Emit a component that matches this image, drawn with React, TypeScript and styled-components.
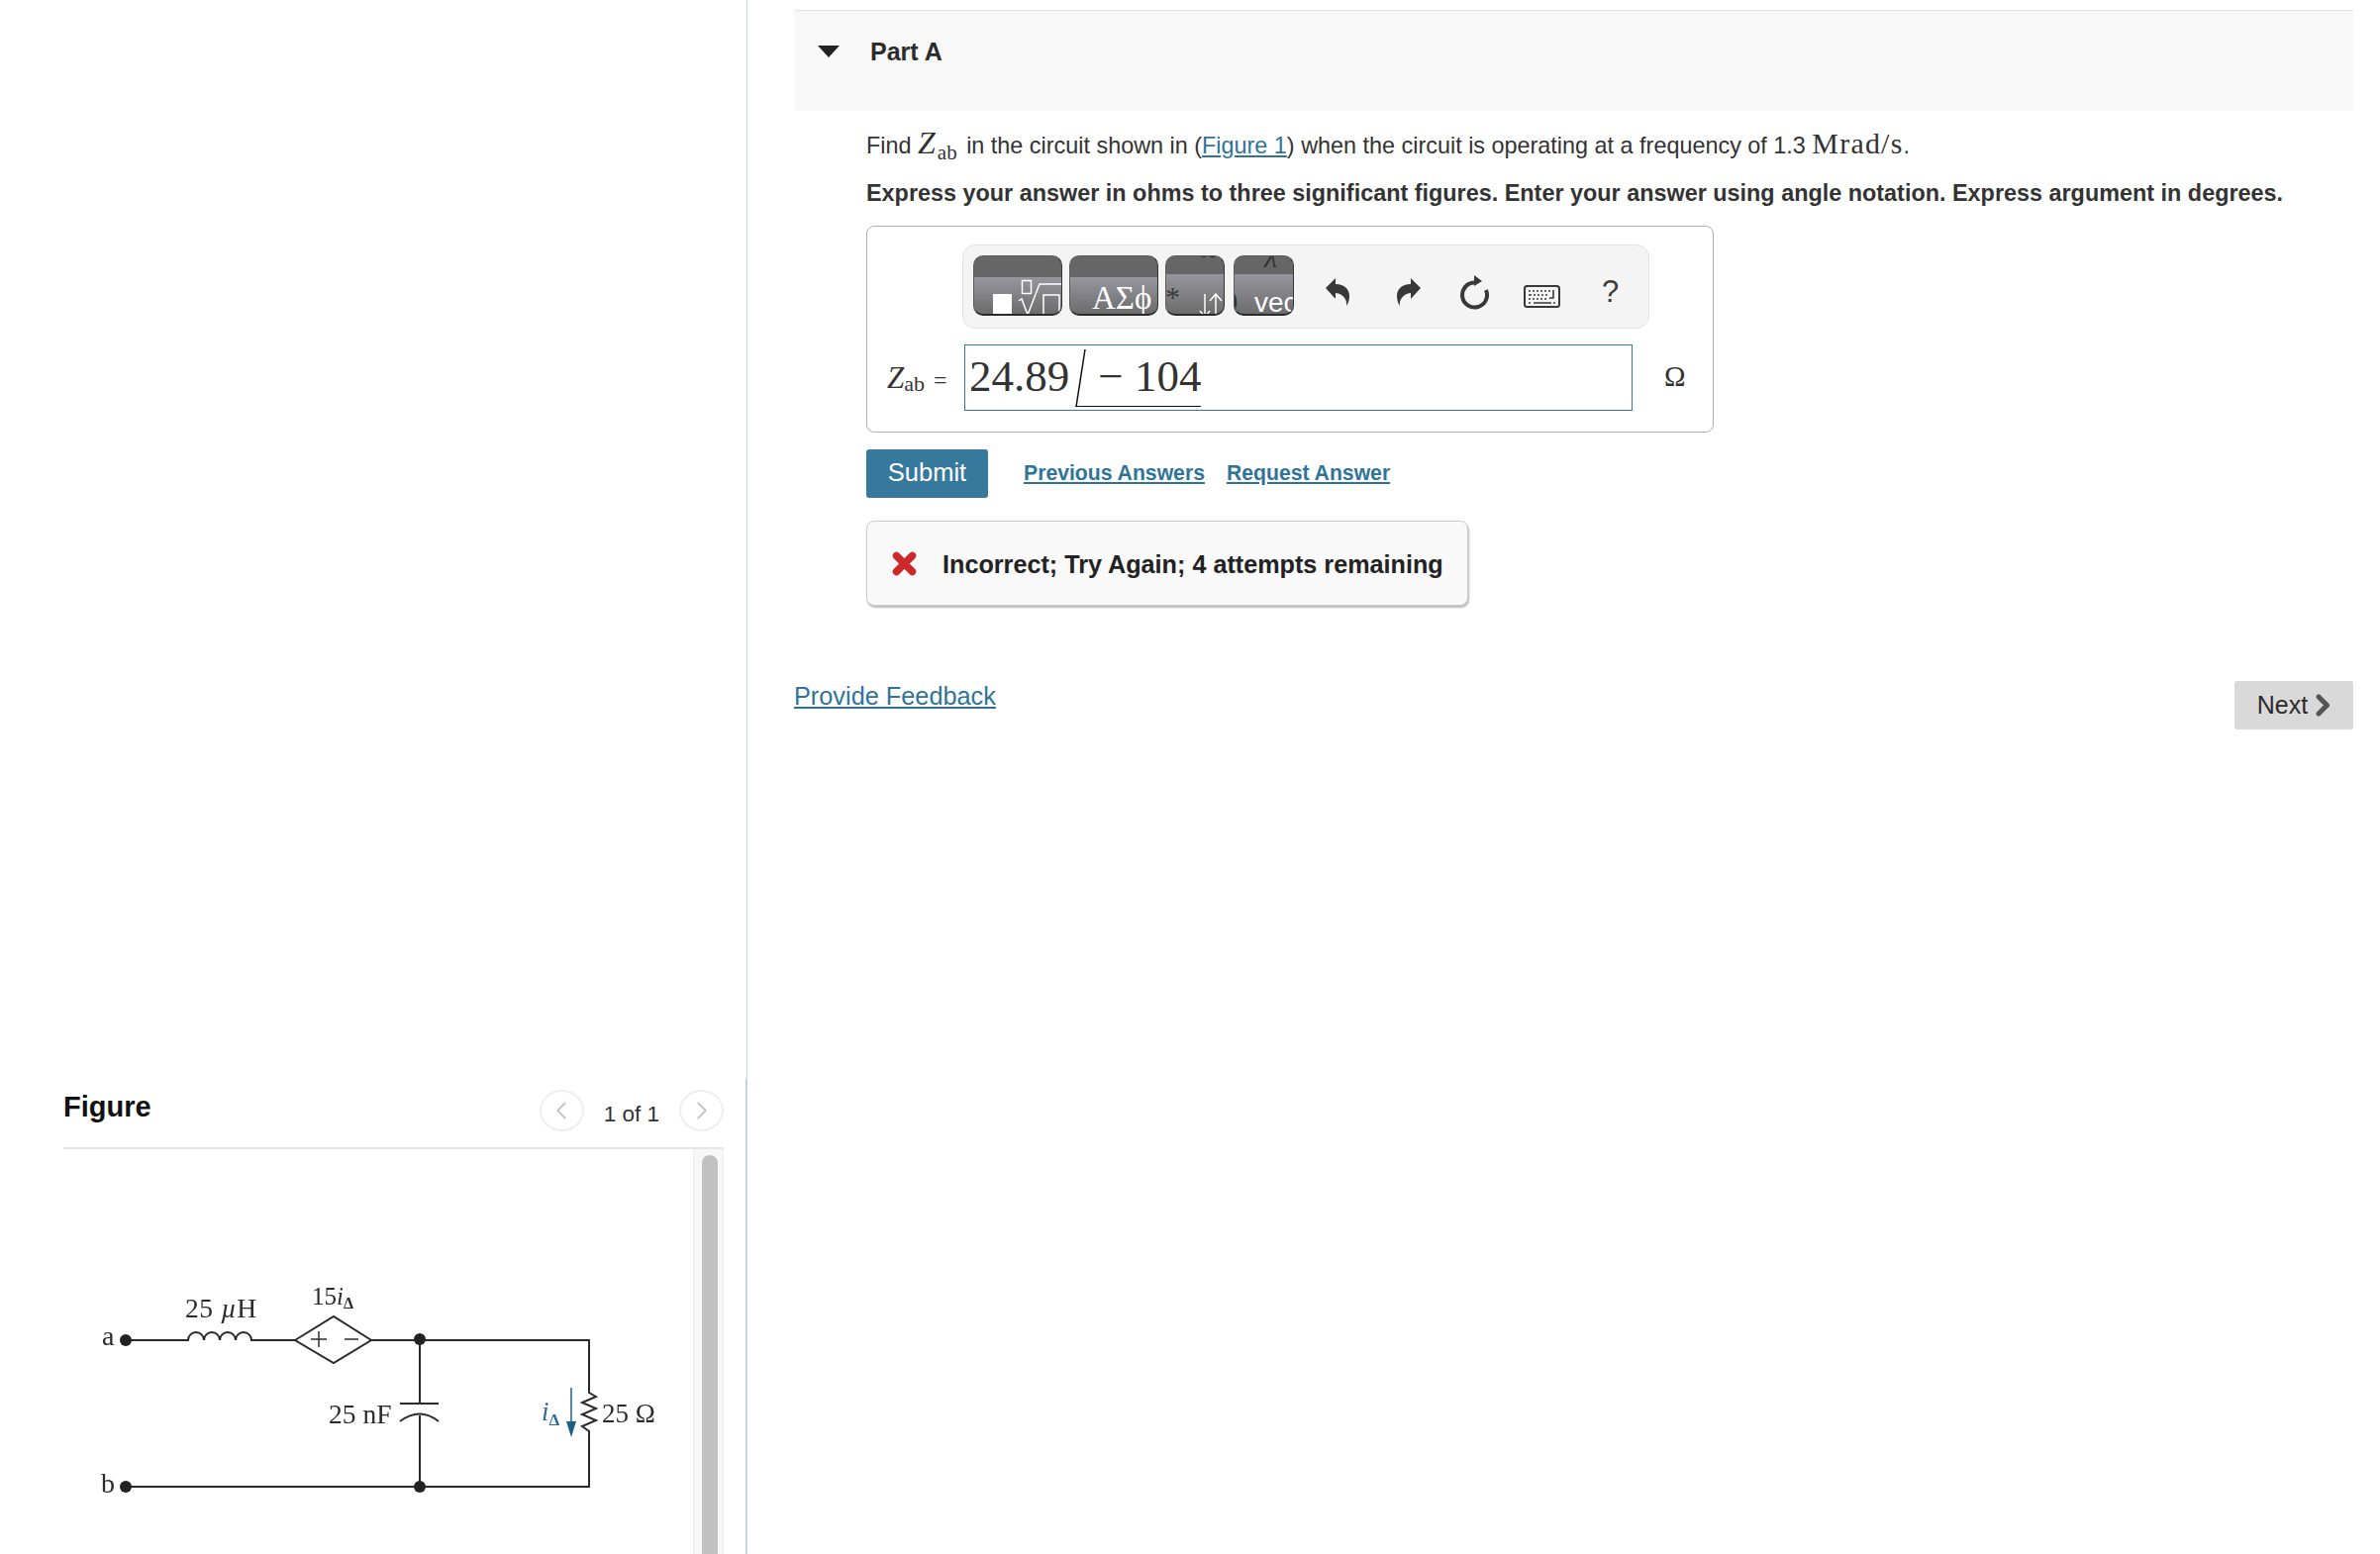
import React from 'react';
import styled, {createGlobalStyle} from 'styled-components';
import {ChevronLeft, ChevronRight} from 'lucide-react';

const GlobalStyle = createGlobalStyle`
  html, body {
    margin: 0;
    padding: 0;
    background: #fff;
    color: #333;
    font-family: "Liberation Sans", Arial, sans-serif;
  }
  * {
    box-sizing: border-box;
  }
`;

const Page = styled.div`
  display: flex;
  width: 2404px;
  height: 1570px;
  overflow: hidden;
`;

const Aside = styled.aside`
  flex: 0 0 754px;
  padding-top: 1090px;
  border-right: 1px solid #c6d5e6;
`;

const FigurePanel = styled.section`
  height: 480px;
  padding: 11px 22px 0 64px;
  border-right: 1px solid #c6d5e6;
  display: flex;
  flex-direction: column;
`;

const FigureHeader = styled.div`
  display: flex;
  justify-content: space-between;
  align-items: flex-start;
  height: 60px;
  border-bottom: 2px solid #e6e6e6;
`;

const FigureTitle = styled.h2`
  margin: 0;
  font-size: 29px;
  line-height: 34px;
  font-weight: bold;
  color: #111;
`;

const Pager = styled.div`
  display: flex;
  align-items: center;
  gap: 20px;
  height: 42px;
`;

const PagerButton = styled.span`
  width: 45px;
  height: 42px;
  border: 2px solid #eee;
  border-radius: 50%;
  display: flex;
  align-items: center;
  justify-content: center;
  color: #c4c4c4;
`;

const PagerText = styled.span`
  font-size: 22.5px;
  line-height: 32px;
  padding-top: 8px;
  color: #333;
`;

const FigureBody = styled.div`
  flex: 1;
  display: flex;
  min-height: 0;
`;

const DiagramSvg = styled.svg`
  flex: 0 0 636px;
  width: 636px;
  height: 408px;
  filter: blur(0.4px);
`;

const ScrollTrack = styled.div`
  flex: 0 0 30px;
  padding: 6px 5px 0 8px;
  background: #f7f7f7;
  border-left: 1px solid #ececec;
  border-right: 1px solid #ececec;
`;

const ScrollThumb = styled.div`
  width: 16px;
  height: 100%;
  background: #c1c1c1;
  border-radius: 8px 8px 0 0;
`;

const Main = styled.main`
  flex: 1;
  padding: 10px 27px 0 47px;
`;

const PartHeader = styled.div`
  display: flex;
  align-items: flex-start;
  height: 102px;
  padding: 25px 0 0 24px;
  background: #f8f8f8;
  border-top: 1px solid #e2e2e2;
`;

const Triangle = styled.span`
  width: 0;
  height: 0;
  margin: 10px 31px 0 0;
  border-left: 11px solid transparent;
  border-right: 11px solid transparent;
  border-top: 12px solid #222;
`;

const PartTitle = styled.h3`
  margin: 0;
  font-size: 25px;
  line-height: 32px;
  font-weight: bold;
  color: #2b2b2b;
`;

const PartBody = styled.div`
  padding-left: 73px;
`;

const Paragraph = styled.p<{$top: number; $bold?: boolean}>`
  margin: ${p => p.$top}px 0 0;
  font-size: 23.4px;
  line-height: 32px;
  font-weight: ${p => (p.$bold ? 'bold' : 'normal')};
  color: #333;
  white-space: nowrap;
`;

const MathVar = styled.span`
  font-family: "Liberation Serif", "Times New Roman", serif;
  font-style: italic;
  font-size: 32px;
  line-height: 0;
  margin-right: 2px;
`;

const MathSub = styled.sub`
  font-family: "Liberation Serif", "Times New Roman", serif;
  font-size: 21px;
  line-height: 0;
  vertical-align: -6px;
  margin-right: 3px;
`;

const MathText = styled.span`
  font-family: "Liberation Serif", "Times New Roman", serif;
  font-size: 30px;
  line-height: 0;
  letter-spacing: 1.2px;
`;

const TextLink = styled.a`
  color: #2f7498;
  text-decoration: underline;
`;

const AnswerBox = styled.div`
  width: 856px;
  height: 209px;
  margin-top: 17px;
  padding: 18px 0 0 96px;
  border: 1px solid #b0b0b0;
  border-radius: 8px;
`;

const Toolbar = styled.div`
  display: flex;
  align-items: flex-start;
  width: 694px;
  height: 85px;
  padding: 10px 0 0 10px;
  background: #f4f4f4;
  border: 1px solid #e2e2e2;
  border-radius: 13px;
`;

const PaletteButton = styled.span<{$width: number; $gap: number; $band: number}>`
  flex: 0 0 ${p => p.$width}px;
  height: 61px;
  margin-right: ${p => p.$gap}px;
  overflow: hidden;
  border-radius: 10px;
  border: 1px solid #5c5c5c;
  border-bottom: 2px solid #2a2a2a;
  border-right-color: #333;
  background:
    linear-gradient(#666 0, #666 ${p => p.$band}px, #97969f ${p => p.$band}px, #6c6c6c 100%);
  svg {
    display: block;
    margin: -1px;
  }
`;

const ToolIcon = styled.span<{$left: number; $top: number}>`
  display: flex;
  margin-left: ${p => p.$left}px;
  margin-top: ${p => p.$top}px;
  color: #383838;
`;

const HelpMark = styled.span`
  margin-left: 42px;
  margin-top: 19px;
  font-size: 31px;
  line-height: 36px;
  color: #3a3a3a;
`;

const InputRow = styled.div`
  display: flex;
  align-items: center;
  margin: 16px 0 0 -96px;
`;

const InputLabel = styled.label`
  flex: 0 0 98px;
  padding-left: 20px;
  font-family: "Liberation Serif", "Times New Roman", serif;
  font-size: 24px;
  color: #333;
  white-space: nowrap;
`;

const LabelVar = styled.i`
  font-size: 31px;
`;

const LabelSub = styled.span`
  font-size: 22px;
  margin-right: 9px;
  position: relative;
  top: 3px;
`;

const AnswerInput = styled.div`
  display: flex;
  align-items: center;
  width: 675px;
  height: 67px;
  padding: 0 0 4px 4px;
  border: 1px solid #37789b;
  font-family: "Liberation Serif", "Times New Roman", serif;
  font-size: 45px;
  color: #333;
`;

const AngleValue = styled.span`
  position: relative;
  margin-left: 6px;
  white-space: nowrap;
`;

const AngleMark = styled.svg`
  position: absolute;
  left: 0;
  top: 4px;
`;

const AngleLine = styled.span`
  display: block;
  height: 62px;
  padding: 5px 0 0 23px;
  line-height: 52px;
  border-bottom: 1.5px solid #111;
`;

const Unit = styled.span`
  margin-left: 32px;
  padding-bottom: 2px;
  font-family: "Liberation Serif", "Times New Roman", serif;
  font-size: 29px;
  color: #333;
`;

const ActionRow = styled.div`
  display: flex;
  align-items: center;
  margin-top: 17px;
`;

const SubmitButton = styled.button`
  width: 123px;
  height: 49px;
  padding: 0 0 2px;
  background: #37799c;
  border: none;
  border-radius: 3px;
  color: #fff;
  font-family: "Liberation Sans", Arial, sans-serif;
  font-size: 25.5px;
  margin-right: 36px;
`;

const ActionLink = styled.a`
  margin: 0 22px 2px 0;
  color: #2f7498;
  font-size: 21.2px;
  font-weight: bold;
  text-decoration: underline;
`;

const ResultBox = styled.div`
  display: flex;
  align-items: center;
  width: 608px;
  height: 86px;
  margin-top: 23px;
  padding: 0 0 0 25px;
  background: #f9f9f9;
  border: 1px solid #ccc;
  border-radius: 8px;
  box-shadow: 1px 2px 2px #bbb;
`;

const ResultText = styled.span`
  margin-left: 26px;
  padding-top: 3px;
  font-size: 25.2px;
  font-weight: bold;
  color: #222;
  white-space: nowrap;
`;

const Footer = styled.div`
  display: flex;
  justify-content: space-between;
  align-items: flex-start;
  margin-top: 75px;
`;

const FeedbackLink = styled.a`
  color: #2f7498;
  font-size: 25.3px;
  line-height: 32px;
  text-decoration: underline;
`;

const NextButton = styled.button`
  display: flex;
  align-items: center;
  justify-content: center;
  gap: 8px;
  width: 120px;
  height: 49px;
  margin-top: 1px;
  padding: 0;
  background: #d9d9d9;
  border: none;
  border-radius: 3px;
  color: #2a2a2a;
  font-family: "Liberation Sans", Arial, sans-serif;
  font-size: 25px;
`;

const serif = '"Liberation Serif", "Times New Roman", serif';

function PaletteIcon({w, children}: {w: number; children: React.ReactNode}) {
  return (
    <svg width={w} height={61} viewBox={`0 0 ${w} 61`}>
      {children}
    </svg>
  );
}

function Circuit() {
  const ink = '#2b2b2b';
  return (
    <DiagramSvg viewBox="64 1162 636 408">
      <g fill="none" stroke={ink} strokeWidth="2">
        <path d="M127 1355H190a8 8 0 0 1 16 0a8 8 0 0 1 16 0a8 8 0 0 1 16 0a8 8 0 0 1 16 0H298" />
        <polygon points="298,1355 337,1331 375,1355 337,1378" />
        <path d="M375 1355H595V1408L602 1412L588 1418L602 1424L588 1430L602 1436L588 1442L595 1447V1503H127" />
        <path d="M424 1355V1419M404 1419H443M424 1431V1503M404 1437Q424 1422 443 1437" />
        <path d="M314 1354H330M322 1346V1362M348 1354H362" strokeWidth="1.5" />
      </g>
      <g fill="#222">
        <circle cx="127" cy="1355" r="6" />
        <circle cx="127" cy="1503" r="6" />
        <circle cx="424" cy="1354" r="6" />
        <circle cx="424" cy="1503" r="6" />
      </g>
      <g fontFamily={serif} fontSize="27" fill={ink}>
        <text x="103" y="1360" fontSize="28">a</text>
        <text x="102" y="1509" fontSize="28">b</text>
        <text x="187" y="1332" fontSize="27.5" letterSpacing="0.5">25 <tspan fontStyle="italic">µ</tspan>H</text>
        <text x="315" y="1319" fontSize="25">15<tspan fontStyle="italic">i</tspan><tspan fontSize="16" fontWeight="bold" dy="4">Δ</tspan></text>
        <text x="332" y="1439" fontSize="27.5">25 nF</text>
        <text x="608" y="1438">25 Ω</text>
      </g>
      <text x="547" y="1436" fontFamily={serif} fontSize="27" fontStyle="italic" fill="#2b6a94">
        i<tspan fontSize="17" fontStyle="normal" fontWeight="bold" dy="5">Δ</tspan>
      </text>
      <path d="M577 1403V1442" stroke="#1c5f8a" strokeWidth="1.5" />
      <polygon points="572,1437 582,1437 577,1453" fill="#1c5f8a" />
    </DiagramSvg>
  );
}

function App() {
  return (
    <Page>
      <GlobalStyle />
      <Aside>
        <FigurePanel>
          <FigureHeader>
            <FigureTitle>Figure</FigureTitle>
            <Pager>
              <PagerButton><ChevronLeft size={30} strokeWidth={1.5} /></PagerButton>
              <PagerText>1 of 1</PagerText>
              <PagerButton><ChevronRight size={30} strokeWidth={1.5} /></PagerButton>
            </Pager>
          </FigureHeader>
          <FigureBody>
            <Circuit />
            <ScrollTrack><ScrollThumb /></ScrollTrack>
          </FigureBody>
        </FigurePanel>
      </Aside>
      <Main>
        <PartHeader>
          <Triangle />
          <PartTitle>Part A</PartTitle>
        </PartHeader>
        <PartBody>
          <Paragraph $top={19}>
            Find <MathVar>Z</MathVar><MathSub>ab</MathSub> in the circuit shown in (<TextLink href="#">Figure 1</TextLink>) when the circuit is operating at a frequency of 1.3 <MathText>Mrad/s</MathText>.
          </Paragraph>
          <Paragraph $top={16} $bold>
            Express your answer in ohms to three significant figures. Enter your answer using angle notation. Express argument in degrees.
          </Paragraph>
          <AnswerBox>
            <Toolbar>
              <PaletteButton $width={90} $gap={7} $band={21}>
                <PaletteIcon w={90}>
                  <rect x="20" y="39" width="19" height="24" fill="#fff" />
                  <g fill="none" stroke="#fff" strokeWidth="1.5">
                    <rect x="49.5" y="25.5" width="9" height="13" />
                    <path d="M46 46L49 44L55 60L67 29H90" />
                    <path d="M71 62V40H87V62" />
                  </g>
                </PaletteIcon>
              </PaletteButton>
              <PaletteButton $width={90} $gap={7} $band={21}>
                <PaletteIcon w={90}>
                  <text x="23" y="54" fontFamily={serif} fontSize="33" fill="#fff">ΑΣϕ</text>
                </PaletteIcon>
              </PaletteButton>
              <PaletteButton $width={60} $gap={9} $band={18}>
                <PaletteIcon w={60}>
                  <text x="34" y="5" fontFamily={serif} fontSize="26" fill="#333">∞</text>
                  <text x="0" y="52" fontFamily={serif} fontSize="30" fill="#3a3a3a">*</text>
                  <g fill="none" stroke="#fff" strokeWidth="1.5">
                    <path d="M40 39V62M35 56L40 62L45 56" />
                    <path d="M51 39V62M45 46L51 39L57 46" />
                  </g>
                </PaletteIcon>
              </PaletteButton>
              <PaletteButton $width={61} $gap={0} $band={18}>
                <PaletteIcon w={61}>
                  <text x="31" y="12" fontFamily={serif} fontSize="30" fontStyle="italic" fill="#333">λ</text>
                  <text x="-5" y="54" fontFamily={serif} fontSize="28" fill="#333">)</text>
                  <text x="21" y="57" fontFamily="'Liberation Sans', sans-serif" fontSize="28" fill="#fff">vec</text>
                </PaletteIcon>
              </PaletteButton>
              <ToolIcon $left={31} $top={22}>
                <svg width="26" height="30" viewBox="0 0 26 30">
                  <path d="M1 11L11 1V7C20 7 25 12 25 19C25 23 24 26 22 29C23 23 19 17 11 16V22Z" fill="currentColor" />
                </svg>
              </ToolIcon>
              <ToolIcon $left={46} $top={22}>
                <svg width="26" height="30" viewBox="0 0 26 30">
                  <path d="M25 11L15 1V7C6 7 1 12 1 19C1 23 2 26 4 29C3 23 7 17 15 16V22Z" fill="currentColor" />
                </svg>
              </ToolIcon>
              <ToolIcon $left={38} $top={20}>
                <svg width="32" height="35" viewBox="0 0 32 35">
                  <path d="M15 7.5A12.5 12.5 0 1 0 27 15" fill="none" stroke="currentColor" strokeWidth="4" />
                  <polygon points="15,0 23,6 15,11" fill="currentColor" />
                </svg>
              </ToolIcon>
              <ToolIcon $left={33} $top={30}>
                <svg width="37" height="23" viewBox="0 0 37 23">
                  <rect x="1" y="1" width="35" height="21" rx="2.5" fill="none" stroke="currentColor" strokeWidth="2" />
                  <path d="M5 6h2M9 6h2M13 6h2M17 6h2M21 6h2M25 6h2M5 10h3M10 10h2M14 10h2M18 10h2M22 10h2M5 14h2M9 14h2M13 14h2M17 14h2M21 14h2M30 5V13H26M5 18h2M10 18h18M30 18h2" fill="none" stroke="currentColor" strokeWidth="1.6" />
                </svg>
              </ToolIcon>
              <HelpMark>?</HelpMark>
            </Toolbar>
            <InputRow>
              <InputLabel>
                <LabelVar>Z</LabelVar><LabelSub>ab</LabelSub>=
              </InputLabel>
              <AnswerInput>
                24.89
                <AngleValue>
                  <AngleMark width="14" height="58" viewBox="0 0 14 58">
                    <path d="M10 0L1 58" fill="none" stroke="#111" strokeWidth="1.5" />
                  </AngleMark>
                  <AngleLine>− 104</AngleLine>
                </AngleValue>
              </AnswerInput>
              <Unit>Ω</Unit>
            </InputRow>
          </AnswerBox>
          <ActionRow>
            <SubmitButton>Submit</SubmitButton>
            <ActionLink href="#">Previous Answers</ActionLink>
            <ActionLink href="#">Request Answer</ActionLink>
          </ActionRow>
          <ResultBox>
            <svg width="25" height="25" viewBox="0 0 25 25">
              <path d="M4.5 4.5L20.5 20.5M20.5 4.5L4.5 20.5" stroke="#cc2a2a" strokeWidth="7.5" strokeLinecap="round" />
            </svg>
            <ResultText>Incorrect; Try Again; 4 attempts remaining</ResultText>
          </ResultBox>
        </PartBody>
        <Footer>
          <FeedbackLink href="#">Provide Feedback</FeedbackLink>
          <NextButton>
            Next
            <svg width="15" height="23" viewBox="0 0 15 23">
              <path d="M3 3L11.5 11.5L3 20" fill="none" stroke="#555" strokeWidth="5" strokeLinejoin="round" strokeLinecap="round" />
            </svg>
          </NextButton>
        </Footer>
      </Main>
    </Page>
  );
}

export default App;
